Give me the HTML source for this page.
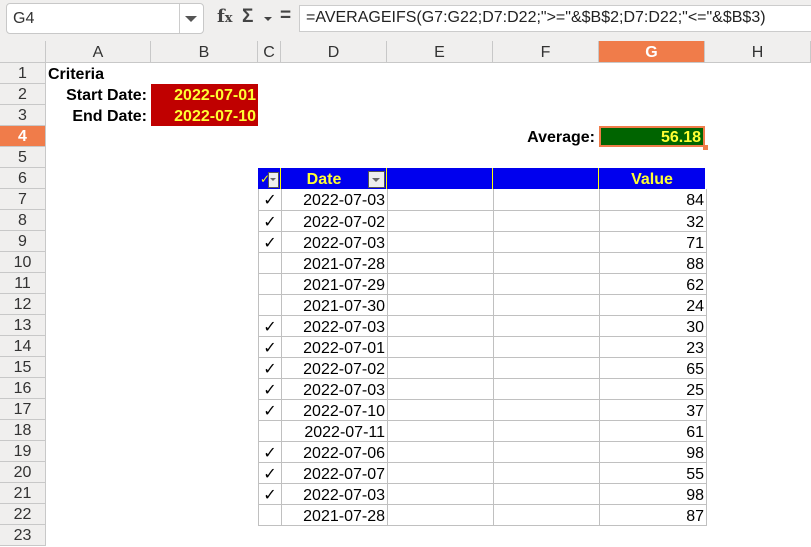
<!DOCTYPE html>
<html><head><meta charset="utf-8"><style>
*{margin:0;padding:0;box-sizing:border-box}
body{width:811px;height:547px;overflow:hidden;background:#fff;font-family:"Liberation Sans",sans-serif;position:relative}
.a{position:absolute}
.tb{left:0;top:0;width:811px;height:41px;background:#f0efee}
.nb{left:6px;top:3px;width:198px;height:31px;background:#fff;border:1px solid #c8c8c8;border-radius:4px;font-size:16px;padding:6px 0 0 6px;color:#333}
.fi{left:299px;top:5px;width:512px;height:27px;background:#fff;border:1px solid #ccc;border-right:none;font-size:16px;padding:3px 0 0 6px;color:#222;white-space:nowrap}
.ch{top:41px;height:22px;background:#f0efee;border-right:1px solid #c8c8c8;border-bottom:1px solid #c8c8c8;text-align:center;font-size:16px;line-height:23px;color:#333}
.rh{left:0;width:46px;height:21px;background:#f0efee;border-bottom:1px solid #c8c8c8;border-right:1px solid #c8c8c8;text-align:center;font-size:16px;line-height:22px;color:#333}
.c{height:21px;font-size:16px;line-height:23px;white-space:nowrap}
.r{text-align:right;padding-right:2px}
.b{font-weight:bold}
#t{position:absolute;left:258px;top:189px;width:448px;border-collapse:collapse;table-layout:fixed;font-size:16px}
#t td{height:21px;padding:0 2px 0 0;border-right:1px solid #c0c0c0;border-bottom:1px solid #c0c0c0;border-left:1px solid #c0c0c0;text-align:right;line-height:20px;white-space:nowrap;overflow:hidden}
#t td span{position:relative;top:2px}
#t td:first-child{text-align:center;padding:0}
</style></head><body>
<div class="a tb"></div>
<div class="a nb">G4</div>
<div class="a" style="left:179px;top:4px;width:1px;height:29px;background:#ccc"></div>
<div class="a" style="left:185px;top:16px;width:0;height:0;border-left:6px solid transparent;border-right:6px solid transparent;border-top:6px solid #555"></div>
<div class="a" style="left:217px;top:6px;font-size:18px;font-weight:bold;color:#444;font-family:'DejaVu Serif',serif">f<span style="font-size:13px">x</span></div>
<div class="a" style="left:242px;top:6px;font-size:19px;font-weight:bold;color:#444">Σ</div>
<div class="a" style="left:264px;top:17px;border-left:4px solid transparent;border-right:4px solid transparent;border-top:4px solid #444"></div>
<div class="a" style="left:280px;top:5px;font-size:19px;font-weight:bold;color:#444">=</div>
<div class="a fi">=AVERAGEIFS(G7:G22;D7:D22;"&gt;="&amp;$B$2;D7:D22;"&lt;="&amp;$B$3)</div>

<div class="a ch" style="left:0;width:46px"></div>
<div class="a ch" style="left:46px;width:105px">A</div>
<div class="a ch" style="left:151px;width:107px">B</div>
<div class="a ch" style="left:258px;width:23px">C</div>
<div class="a ch" style="left:281px;width:106px">D</div>
<div class="a ch" style="left:387px;width:106px">E</div>
<div class="a ch" style="left:493px;width:106px">F</div>
<div class="a ch" style="left:599px;width:106px;background:#f07c4a;color:#fff;font-weight:bold">G</div>
<div class="a ch" style="left:705px;width:106px">H</div>

<div class="a rh" style="top:63px">1</div>
<div class="a rh" style="top:84px">2</div>
<div class="a rh" style="top:105px">3</div>
<div class="a rh" style="top:126px;background:#f07c4a;color:#fff;font-weight:bold">4</div>
<div class="a rh" style="top:147px">5</div>
<div class="a rh" style="top:168px">6</div>
<div class="a rh" style="top:189px">7</div>
<div class="a rh" style="top:210px">8</div>
<div class="a rh" style="top:231px">9</div>
<div class="a rh" style="top:252px">10</div>
<div class="a rh" style="top:273px">11</div>
<div class="a rh" style="top:294px">12</div>
<div class="a rh" style="top:315px">13</div>
<div class="a rh" style="top:336px">14</div>
<div class="a rh" style="top:357px">15</div>
<div class="a rh" style="top:378px">16</div>
<div class="a rh" style="top:399px">17</div>
<div class="a rh" style="top:420px">18</div>
<div class="a rh" style="top:441px">19</div>
<div class="a rh" style="top:462px">20</div>
<div class="a rh" style="top:483px">21</div>
<div class="a rh" style="top:504px">22</div>
<div class="a rh" style="top:525px">23</div>

<div class="a c b" style="left:48px;top:63px">Criteria</div>
<div class="a c b r" style="left:46px;top:84px;width:103px">Start Date:</div>
<div class="a c b r" style="left:46px;top:105px;width:103px">End Date:</div>
<div class="a c b r" style="left:151px;top:84px;width:107px;background:#c00000;color:#ffff33">2022-07-01</div>
<div class="a c b r" style="left:151px;top:105px;width:107px;background:#c00000;color:#ffff33">2022-07-10</div>
<div class="a c b r" style="left:493px;top:126px;width:104px">Average:</div>
<div class="a c b r" style="left:599px;top:126px;width:106px;background:#006400;color:#ffff33;border:2px solid #f07c4a;line-height:19px">56.18</div>
<div class="a" style="left:703px;top:145px;width:5px;height:5px;background:#f07c4a"></div>

<div class="a" style="left:258px;top:168px;width:447px;height:21px;background:#0000ee"></div>
<div class="a" style="left:280px;top:168px;width:1px;height:21px;background:#ffff00"></div>
<div class="a" style="left:386px;top:168px;width:1px;height:21px;background:#ffff00"></div>
<div class="a" style="left:492px;top:168px;width:1px;height:21px;background:#ffff00"></div>
<div class="a" style="left:598px;top:168px;width:1px;height:21px;background:#ffff00"></div>
<div class="a" style="left:260px;top:169px;font-size:12px;color:#ff0;line-height:21px">✓</div>
<div class="a" style="left:268px;top:172px;width:11px;height:16px;background:#eee;border:1px solid #555"></div>
<div class="a" style="left:270px;top:178px;border-left:3px solid transparent;border-right:3px solid transparent;border-top:3px solid #666"></div>
<div class="a c b" style="left:281px;top:168px;width:86px;text-align:center;color:#ffff33">Date</div>
<div class="a" style="left:368px;top:171px;width:17px;height:17px;background:#eee;border:1px solid #555"></div>
<div class="a" style="left:372px;top:178px;border-left:4px solid transparent;border-right:4px solid transparent;border-top:4px solid #666"></div>
<div class="a c b" style="left:599px;top:168px;width:106px;text-align:center;color:#ffff33">Value</div>

<table id="t">
<colgroup><col style="width:23px"><col style="width:106px"><col style="width:106px"><col style="width:106px"><col style="width:107px"></colgroup>
<tbody>
<tr><td><span>✓</span></td><td><span>2022-07-03</span></td><td></td><td></td><td><span>84</span></td></tr>
<tr><td><span>✓</span></td><td><span>2022-07-02</span></td><td></td><td></td><td><span>32</span></td></tr>
<tr><td><span>✓</span></td><td><span>2022-07-03</span></td><td></td><td></td><td><span>71</span></td></tr>
<tr><td></td><td><span>2021-07-28</span></td><td></td><td></td><td><span>88</span></td></tr>
<tr><td></td><td><span>2021-07-29</span></td><td></td><td></td><td><span>62</span></td></tr>
<tr><td></td><td><span>2021-07-30</span></td><td></td><td></td><td><span>24</span></td></tr>
<tr><td><span>✓</span></td><td><span>2022-07-03</span></td><td></td><td></td><td><span>30</span></td></tr>
<tr><td><span>✓</span></td><td><span>2022-07-01</span></td><td></td><td></td><td><span>23</span></td></tr>
<tr><td><span>✓</span></td><td><span>2022-07-02</span></td><td></td><td></td><td><span>65</span></td></tr>
<tr><td><span>✓</span></td><td><span>2022-07-03</span></td><td></td><td></td><td><span>25</span></td></tr>
<tr><td><span>✓</span></td><td><span>2022-07-10</span></td><td></td><td></td><td><span>37</span></td></tr>
<tr><td></td><td><span>2022-07-11</span></td><td></td><td></td><td><span>61</span></td></tr>
<tr><td><span>✓</span></td><td><span>2022-07-06</span></td><td></td><td></td><td><span>98</span></td></tr>
<tr><td><span>✓</span></td><td><span>2022-07-07</span></td><td></td><td></td><td><span>55</span></td></tr>
<tr><td><span>✓</span></td><td><span>2022-07-03</span></td><td></td><td></td><td><span>98</span></td></tr>
<tr><td></td><td><span>2021-07-28</span></td><td></td><td></td><td><span>87</span></td></tr>
</tbody></table>
</body></html>
